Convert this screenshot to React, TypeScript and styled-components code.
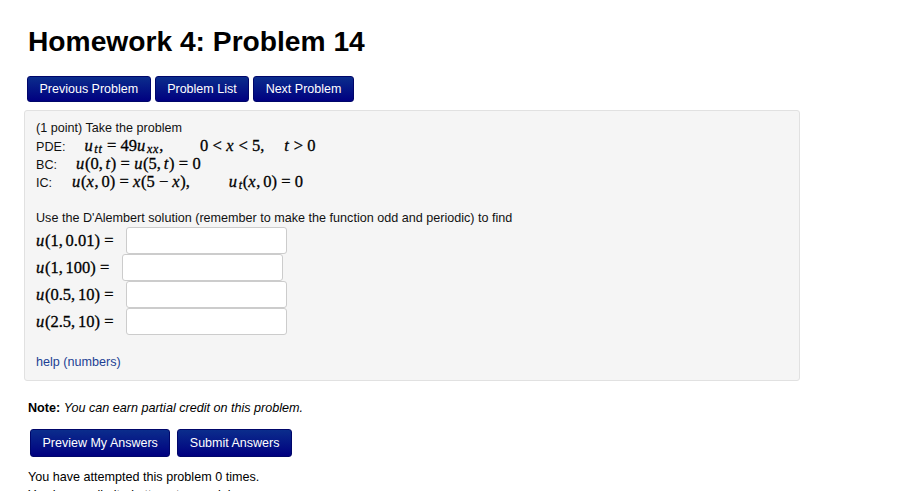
import styled, { createGlobalStyle } from 'styled-components';

const GlobalStyle = createGlobalStyle`
  html, body {
    margin: 0;
    padding: 0;
    background: #ffffff;
  }

  body {
    font-family: "Liberation Sans", Arial, sans-serif;
    font-size: 12.6px;
    line-height: 18px;
    color: #111111;
  }
`;

const Page = styled.div`
  padding: 25px 24px 0 24px;
  width: 776px;
`;

const Title = styled.h1`
  margin: 0 0 19px 4px;
  font-size: 28.2px;
  line-height: 32px;
  font-weight: bold;
  color: #000000;
`;

const ButtonRow = styled.div<{ $gap: number; $indent: number }>`
  display: flex;
  gap: ${(p) => p.$gap}px;
  margin-left: ${(p) => p.$indent}px;
`;

const NavButton = styled.button<{ $height: number }>`
  height: ${(p) => p.$height}px;
  padding: 0 11.5px;
  font-family: "Liberation Sans", Arial, sans-serif;
  font-size: 12.5px;
  color: #ffffff;
  background: linear-gradient(to bottom, #0b2d8c, #000080);
  border: 1px solid #00066a;
  border-radius: 3px;
  cursor: pointer;
`;

const Panel = styled.div`
  margin-top: 8px;
  padding: 8px 11px 9px 11px;
  background: #f5f5f5;
  border: 1px solid #e1e1e1;
  border-radius: 3px;
`;

const Line = styled.div`
  display: flex;
  align-items: baseline;
  height: 18px;
  white-space: nowrap;
`;

const Blank = styled.div`
  height: 18px;
`;

const Math = styled.span<{ $left?: number }>`
  font-family: "Liberation Serif", "Times New Roman", serif;
  font-size: 16.5px;
  line-height: 18px;
  color: #000000;
  -webkit-text-stroke: 0.3px #000000;
  margin-left: ${(p) => p.$left ?? 0}px;
  white-space: nowrap;
`;

const V = styled.i`
  font-style: italic;
  margin-right: 0.04em;
`;

const Rel = styled.span`
  margin: 0 0.26em;
`;

const Comma = styled.span`
  margin-right: 0.17em;
`;

const Sub = styled.sub`
  font-size: 12px;
  font-style: italic;
  letter-spacing: 0.8px;
  margin-left: 1px;
  vertical-align: -2px;
  line-height: 0;
`;

const AnswerRow = styled.div`
  display: flex;
  align-items: center;
  height: 27px;
`;

const AnswerInput = styled.input`
  box-sizing: border-box;
  width: 161px;
  height: 27px;
  margin-left: 8px;
  border: 1px solid #cccccc;
  border-radius: 3px;
  background: #ffffff;
`;

const HelpLink = styled.a`
  color: #1c3f94;
  text-decoration: none;
`;

const Note = styled.div`
  margin: 18px 0 12px 4px;
  line-height: 18px;
  color: #000000;

  b {
    font-weight: bold;
  }

  i {
    font-style: italic;
  }
`;

const Status = styled.div`
  margin: 11px 0 0 4px;
  line-height: 18px;
  color: #000000;
`;

const StatusNext = styled(Status)`
  margin-top: 0;
`;

const answers = [
  { x: '1', t: '0.01' },
  { x: '1', t: '100' },
  { x: '0.5', t: '10' },
  { x: '2.5', t: '10' },
];

export default function App() {
  return (
    <>
      <GlobalStyle />
      <Page>
        <Title>Homework 4: Problem 14</Title>
        <ButtonRow $gap={4} $indent={3}>
          <NavButton $height={26}>Previous Problem</NavButton>
          <NavButton $height={26}>Problem List</NavButton>
          <NavButton $height={26}>Next Problem</NavButton>
        </ButtonRow>

        <Panel>
          <Line>(1 point) Take the problem</Line>
          <Line>
            <span>PDE:</span>
            <Math $left={19}>
              <V>u</V>
              <Sub>tt</Sub>
              <Rel>=</Rel>49<V>u</V>
              <Sub>xx</Sub>
              <Comma>,</Comma>
            </Math>
            <Math $left={34}>
              0<Rel>&lt;</Rel>
              <V>x</V>
              <Rel>&lt;</Rel>5<Comma>,</Comma>
            </Math>
            <Math $left={17}>
              <V>t</V>
              <Rel>&gt;</Rel>0
            </Math>
          </Line>
          <Line>
            <span>BC:</span>
            <Math $left={19}>
              <V>u</V>(0<Comma>,</Comma>
              <V>t</V>)<Rel>=</Rel>
              <V>u</V>(5<Comma>,</Comma>
              <V>t</V>)<Rel>=</Rel>0
            </Math>
          </Line>
          <Line>
            <span>IC:</span>
            <Math $left={20}>
              <V>u</V>(<V>x</V>
              <Comma>,</Comma>0)<Rel>=</Rel>
              <V>x</V>(5 − <V>x</V>)<Comma>,</Comma>
            </Math>
            <Math $left={36}>
              <V>u</V>
              <Sub>t</Sub>(<V>x</V>
              <Comma>,</Comma>0)<Rel>=</Rel>0
            </Math>
          </Line>
          <Blank />
          <Line>Use the D'Alembert solution (remember to make the function odd and periodic) to find</Line>
          {answers.map((a) => (
            <AnswerRow key={a.x + a.t}>
              <Math>
                <V>u</V>({a.x}
                <Comma>,</Comma>
                {a.t})<Rel>=</Rel>
              </Math>
              <AnswerInput type="text" />
            </AnswerRow>
          ))}
          <Blank />
          <Line>
            <HelpLink href="#">help (numbers)</HelpLink>
          </Line>
        </Panel>

        <Note>
          <b>Note:</b> <i>You can earn partial credit on this problem.</i>
        </Note>

        <ButtonRow $gap={7} $indent={6}>
          <NavButton $height={28}>Preview My Answers</NavButton>
          <NavButton $height={28}>Submit Answers</NavButton>
        </ButtonRow>

        <Status>You have attempted this problem 0 times.</Status>
        <StatusNext>You have unlimited attempts remaining.</StatusNext>
      </Page>
    </>
  );
}
